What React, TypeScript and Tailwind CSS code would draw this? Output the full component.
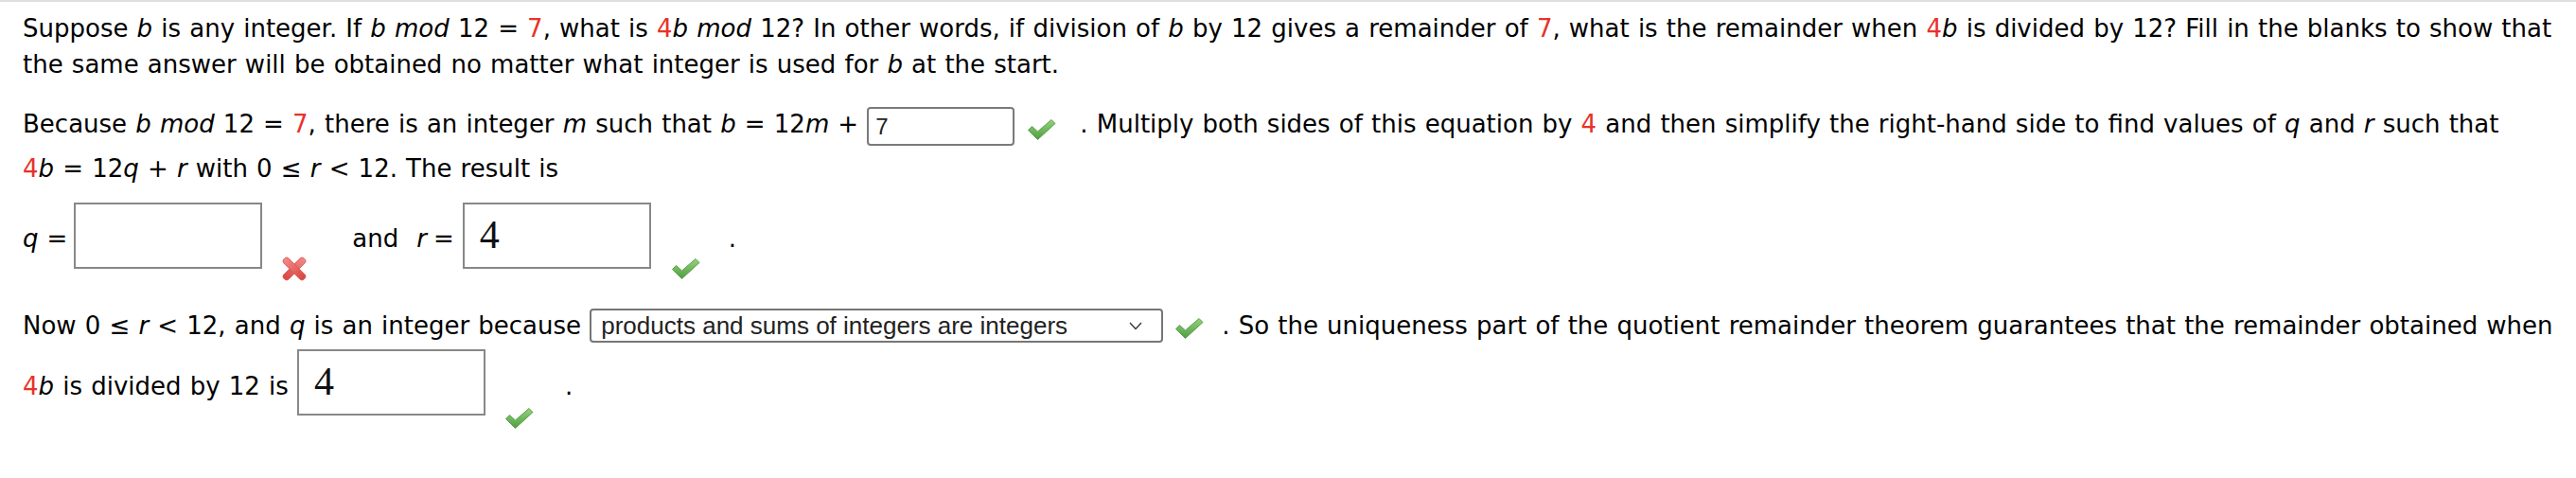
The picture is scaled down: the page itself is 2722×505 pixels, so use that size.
import React from "react";

const Red = ({ children }: { children: React.ReactNode }) => (
  <span className="text-[#e8322a]">{children}</span>
);

const V = ({ children }: { children: React.ReactNode }) => <i>{children}</i>;

function Check({ className = "" }: { className?: string }) {
  return (
    <svg width="31" height="24" viewBox="0 0 31 24" className={className}>
      <defs>
        <linearGradient id="chk" x1="0" y1="0" x2="0" y2="1">
          <stop offset="0" stopColor="#93d37f" />
          <stop offset="1" stopColor="#4f9d3e" />
        </linearGradient>
      </defs>
      <polygon
        points="1.5,12.5 5.5,8.5 11.5,14 26,1.5 30,5.5 11.5,22.5"
        fill="url(#chk)"
        stroke="#5d9f4c"
        strokeWidth="1"
        strokeLinejoin="round"
      />
    </svg>
  );
}

function Cross({ className = "" }: { className?: string }) {
  return (
    <svg width="28" height="28" viewBox="0 0 27 27" className={className}>
      <defs>
        <linearGradient id="crs" x1="0" y1="0" x2="0" y2="1">
          <stop offset="0" stopColor="#f28a8a" />
          <stop offset="1" stopColor="#d9443f" />
        </linearGradient>
      </defs>
      <g fill="url(#crs)" stroke="#d65a57" strokeWidth="0.8">
        <rect x="10" y="-1" width="7" height="29" rx="3" transform="rotate(45 13.5 13.5)" />
        <rect x="10" y="-1" width="7" height="29" rx="3" transform="rotate(-45 13.5 13.5)" />
      </g>
    </svg>
  );
}

function AnswerBox({ value }: { value?: string }) {
  return (
    <div className="w-[199px] h-[70px] border-2 border-[#888888] bg-white flex items-start pl-[16px] pt-[8px]">
      <span className="text-[42px] leading-[48px] font-['Liberation_Serif',serif] text-[#111]">{value}</span>
    </div>
  );
}

export default function App() {
  return (
    <div className="w-[2722px] h-[505px] bg-white border-t-2 border-[#dedede] pl-[24px] text-black text-[26px] leading-[38px] [word-spacing:0.9px] font-['DejaVu_Sans',Verdana,sans-serif]">
      {/* intro */}
      <div className="pt-[9px] whitespace-pre">
        <div>
          Suppose <V>b</V> is any integer. If <V>b mod</V> 12 = <Red>7</Red>, what is <Red>4</Red>
          <V>b</V> <V>mod</V> 12? In other words, if division of <V>b</V> by 12 gives a remainder of{" "}
          <Red>7</Red>, what is the remainder when <Red>4</Red>
          <V>b</V> is divided by 12? Fill in the blanks to show that
        </div>
        <div>
          the same answer will be obtained no matter what integer is used for <V>b</V> at the start.
        </div>
      </div>

      {/* b = 12m + r */}
      <div className="mt-[25px] h-[42px] flex items-start whitespace-pre">
        <span>
          Because <V>b mod</V> 12 = <Red>7</Red>, there is an integer <V>m</V> such that <V>b</V> = 12
          <V>m</V> +{" "}
        </span>
        <div className="mt-[1px] w-[156px] h-[41px] border-2 border-[#7a7a7a] rounded-[4px] flex items-center pl-[7px]">
          <span className="text-[24px] font-['Liberation_Sans',Arial,sans-serif] text-[#222]">7</span>
        </div>
        <Check className="ml-[13px] mt-[13px]" />
        <span className="ml-[25px]">
          . Multiply both sides of this equation by <Red>4</Red> and then simplify the right-hand side to
          find values of <V>q</V> and <V>r</V> such that
        </span>
      </div>
      <div className="mt-[5px] whitespace-pre">
        <Red>4</Red>
        <V>b</V> = 12<V>q</V> + <V>r</V> with 0 ≤ <V>r</V> &lt; 12. The result is
      </div>

      {/* q and r */}
      <div className="mt-[17px] h-[83px] flex items-start whitespace-pre">
        <span className="mt-[19px]">
          <V>q</V>
        </span>
        <span className="mt-[19px] ml-[9px] mr-[7px]">=</span>
        <AnswerBox />
        <Cross className="ml-[20px] mt-[56px]" />
        <span className="mt-[19px] ml-[47px]">and</span>
        <span className="mt-[19px] ml-[19px]">
          <V>r</V>
        </span>
        <span className="mt-[19px] ml-[7px] mr-[9px]">=</span>
        <AnswerBox value="4" />
        <Check className="ml-[21px] mt-[58px]" />
        <span className="mt-[19px] ml-[30px]">.</span>
      </div>

      {/* uniqueness */}
      <div className="mt-[28px] h-[37px] flex items-start whitespace-pre">
        <span>
          Now 0 ≤ <V>r</V> &lt; 12, and <V>q</V> is an integer because{" "}
        </span>
        <div className="mt-[1px] w-[606px] h-[36px] border-2 border-[#767676] rounded-[4px] flex items-center pl-[10px] pr-[20px]">
          <span className="flex-1 text-[26px] leading-[30px] [word-spacing:0px] font-['Liberation_Sans',Arial,sans-serif] text-[#222]">
            products and sums of integers are integers
          </span>
          <svg width="14" height="9" viewBox="0 0 14 9">
            <polyline points="1,1 7,7.5 13,1" fill="none" stroke="#333" strokeWidth="1.3" />
          </svg>
        </div>
        <Check className="ml-[12px] mt-[10px]" />
        <span className="ml-[19px]">
          . So the uniqueness part of the quotient remainder theorem guarantees that the remainder obtained when
        </span>
      </div>
      <div className="mt-[7px] h-[84px] flex items-start whitespace-pre">
        <span className="mt-[20px]">
          <Red>4</Red>
          <V>b</V> is divided by 12 is{" "}
        </span>
        <AnswerBox value="4" />
        <Check className="ml-[20px] mt-[61px]" />
        <span className="mt-[20px] ml-[33px]">.</span>
      </div>
    </div>
  );
}
